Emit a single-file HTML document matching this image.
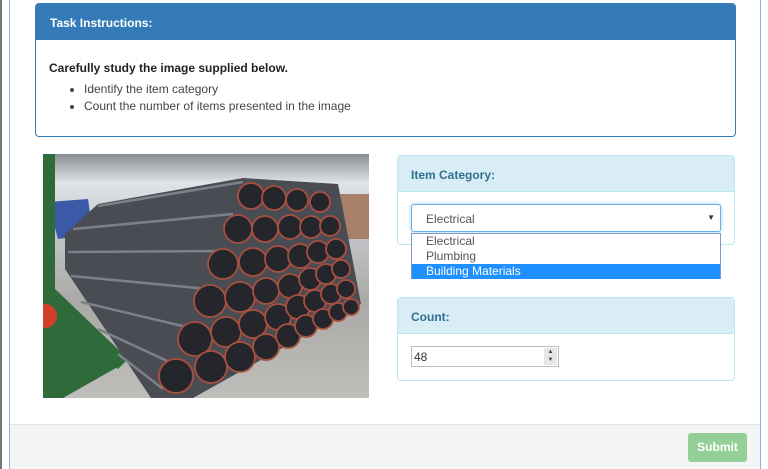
<!DOCTYPE html>
<html><head><meta charset="utf-8"><style>
*{box-sizing:border-box;margin:0;padding:0}
html,body{width:768px;height:469px;overflow:hidden}
body{background:#fff;font-family:"Liberation Sans",Arial,sans-serif;font-size:12px;color:#333;position:relative}
.lstrip{position:absolute;left:0;top:0;width:2px;height:469px;background:#777}
.frame{position:absolute;left:9px;top:0;width:752px;height:469px;border-left:1px solid #8fb4dd;border-right:1px solid #8fb4dd}
.footer{position:absolute;left:10px;top:424px;width:750px;height:45px;background:#f5f5f5;border-top:1px solid #e3e3e3}
.btn{position:absolute;left:688px;top:433px;width:59px;height:29px;background:#93cf96;border-radius:3px;color:#fff;font-weight:bold;font-size:12px;text-align:center;line-height:29px}
.task{position:absolute;left:35px;top:3px;width:701px;height:134px;border:1px solid #337ab7;border-radius:4px;overflow:hidden}
.task .h{background:#337ab7;height:36px;color:#fff;font-weight:bold;font-size:12px;padding:12px 0 0 14px}
.task .b{padding:21px 0 0 13px}
.task .b p{font-weight:bold;font-size:12px;color:#222}
.task ul{margin:6px 0 0 35px;color:#444;font-size:12px;line-height:17px}
.pnl{position:absolute;left:397px;width:338px;border:1px solid #bce8f1;border-radius:4px;overflow:hidden;background:#fff}
.pnl .h{background:#d9edf7;height:36px;color:#31708f;font-weight:bold;font-size:12px;padding:12px 0 0 13px;border-bottom:1px solid #bce8f1}
.sel{position:absolute;left:411px;top:204px;width:310px;height:28px;border:1px solid #66afe9;border-radius:3px;box-shadow:0 0 4px rgba(102,175,233,.6);background:#fff;color:#555;font-size:12px;padding:7px 0 0 14px}
.sel span{position:absolute;right:5px;top:8px;font-size:8px;color:#333}
.dd{position:absolute;left:411px;top:233px;width:310px;height:46px;border:1px solid #7a9cc8;background:#fff;font-size:12px;color:#555;line-height:15px}
.dd div{padding-left:14px;height:15px}
.dd .on{background:#1e90ff;color:#fff}
.num{position:absolute;left:411px;top:346px;width:148px;height:21px;border:1px solid #bbb;background:#fff;font-size:12px;padding:3px 0 0 2px;color:#333}
.spin{position:absolute;right:1px;top:1px;width:13px;height:17px;background:#e6e6e6;font-size:6px;line-height:8px;text-align:center;color:#444}
</style></head><body>
<div class="lstrip"></div>
<div class="frame"></div>
<div class="task"><div class="h">Task Instructions:</div><div class="b"><p>Carefully study the image supplied below.</p><ul><li>Identify the item category</li><li>Count the number of items presented in the image</li></ul></div></div>
<svg style="position:absolute;left:43px;top:154px" width="326" height="244" viewBox="0 0 326 244">
<defs><linearGradient id="bg" x1="0" y1="0" x2="0" y2="1"><stop offset="0" stop-color="#8a8d92"/><stop offset=".12" stop-color="#e0e3e8"/><stop offset=".3" stop-color="#c5c8cc"/><stop offset=".6" stop-color="#aaa9a6"/><stop offset="1" stop-color="#c0bebb"/></linearGradient></defs>
<rect width="326" height="244" fill="url(#bg)"/>
<rect x="292" y="40" width="34" height="45" fill="#a88068"/>
<path d="M5 48 L45 45 L50 80 L15 85Z" fill="#3a5aa8"/>
<path d="M0 0 L12 0 L12 135 L80 200 L80 210 L20 244 L0 244Z" fill="#2f6a3a"/>
<path d="M12 150 L85 205 L75 215 L12 165Z" fill="#2f6a3a"/>
<circle cx="2" cy="162" r="12" fill="#d0402a"/>
<polygon points="200,24 295,30 318,150 150,244 108,244 22,115 22,80 55,50" fill="#4a4c53"/>
<g stroke="#7c8088" stroke-width="2.5" fill="none"><path d="M55 52 L200 28"/><path d="M30 75 L190 60"/><path d="M25 98 L178 97"/><path d="M28 122 L165 135"/><path d="M38 148 L152 175"/><path d="M55 175 L135 212"/><path d="M75 200 L120 235"/></g>
<g fill="#25262b" stroke="#a85040" stroke-width="1.8">
<circle cx="208" cy="42" r="13"/><circle cx="231" cy="44" r="12"/><circle cx="254" cy="46" r="11"/><circle cx="277" cy="48" r="10"/>
<circle cx="195" cy="75" r="14"/><circle cx="222" cy="75" r="13"/><circle cx="247" cy="73" r="12"/><circle cx="268" cy="73" r="11"/><circle cx="287" cy="72" r="10"/>
<circle cx="180" cy="110" r="15"/><circle cx="210" cy="108" r="14"/><circle cx="235" cy="105" r="13"/><circle cx="257" cy="102" r="12"/><circle cx="275" cy="98" r="11"/><circle cx="293" cy="95" r="10"/>
<circle cx="167" cy="147" r="16"/><circle cx="197" cy="143" r="15"/><circle cx="223" cy="137" r="13"/><circle cx="247" cy="132" r="12"/><circle cx="267" cy="125" r="11"/><circle cx="283" cy="120" r="10"/><circle cx="298" cy="115" r="9"/>
<circle cx="152" cy="185" r="17"/><circle cx="183" cy="178" r="15"/><circle cx="210" cy="170" r="14"/><circle cx="235" cy="163" r="13"/><circle cx="255" cy="153" r="12"/><circle cx="272" cy="147" r="11"/><circle cx="288" cy="140" r="10"/><circle cx="303" cy="135" r="9"/>
<circle cx="133" cy="222" r="17"/><circle cx="168" cy="213" r="16"/><circle cx="197" cy="203" r="15"/><circle cx="223" cy="193" r="13"/><circle cx="245" cy="182" r="12"/><circle cx="263" cy="172" r="11"/><circle cx="280" cy="165" r="10"/><circle cx="295" cy="158" r="9"/><circle cx="308" cy="153" r="8"/>
</g></svg>
<div class="pnl" style="top:155px;height:90px"><div class="h">Item Category:</div></div>
<div class="pnl" style="top:297px;height:84px"><div class="h">Count:</div></div>
<div class="sel">Electrical<span>▼</span></div>
<div class="dd"><div>Electrical</div><div>Plumbing</div><div class="on">Building Materials</div></div>
<div class="num">48<div class="spin">▲<br>▼</div></div>
<div class="footer"></div>
<div class="btn">Submit</div>
</body></html>
